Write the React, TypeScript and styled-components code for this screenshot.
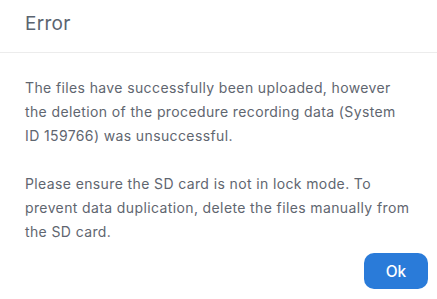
import React from 'react';
import styled, { createGlobalStyle } from 'styled-components';

const GlobalStyle = createGlobalStyle`
  body {
    margin: 0;
    background: #ffffff;
    font-family: Inter, "Noto Sans", sans-serif;
  }
`;

const Dialog = styled.div`
  display: flex;
  flex-direction: column;
  width: 437px;
  height: 299px;
  background: #ffffff;
`;

const Header = styled.div`
  padding: 12px 25px 16px;
  border-bottom: 1px solid #ececec;
`;

const Title = styled.h2`
  margin: 0;
  font-size: 19px;
  line-height: 24px;
  font-weight: 400;
  letter-spacing: 0.3px;
  color: #5b6470;
`;

const Body = styled.div`
  display: flex;
  flex-direction: column;
  gap: 24px;
  padding: 23px 25px 0;
`;

const Paragraph = styled.p`
  margin: 0;
  font-size: 14px;
  line-height: 24px;
  letter-spacing: 0.38px;
  color: #5f6670;
`;

const Footer = styled.div`
  display: flex;
  justify-content: flex-end;
  padding: 9px 9px 0;
`;

const Button = styled.button`
  width: 64px;
  height: 36px;
  border: none;
  border-radius: 10px;
  background: #2a7bd9;
  color: #ffffff;
  font-family: Inter, "Noto Sans", sans-serif;
  font-size: 15.5px;
  font-weight: 500;
  cursor: pointer;
`;

const App = () => (
  <>
    <GlobalStyle />
    <Dialog>
      <Header>
        <Title>Error</Title>
      </Header>
      <Body>
        <Paragraph>
          The files have successfully been uploaded, however the deletion of the procedure recording data (System ID
          159766) was unsuccessful.
        </Paragraph>
        <Paragraph>
          Please ensure the SD card is not in lock mode. To prevent data duplication, delete the files manually from the
          SD card.
        </Paragraph>
      </Body>
      <Footer>
        <Button>Ok</Button>
      </Footer>
    </Dialog>
  </>
);

export default App;
